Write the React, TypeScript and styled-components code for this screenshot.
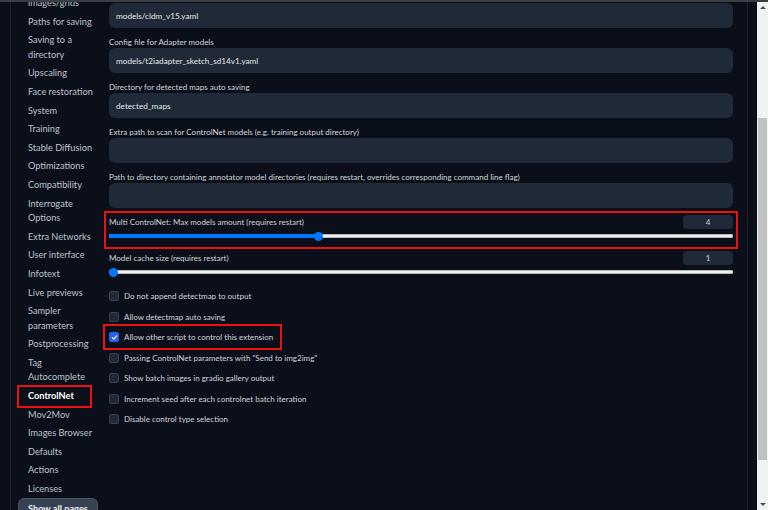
import styled, { createGlobalStyle } from 'styled-components';

const GlobalStyle = createGlobalStyle`
	html, body {
		margin: 0;
		padding: 0;
		background: #0b0f19;
	}
	body {
		font-family: Lato, 'Noto Sans', sans-serif;
	}
`;

const Frame = styled.div`
	display: flex;
	width: 768px;
	height: 510px;
	overflow: hidden;
	box-sizing: border-box;
	border-top: 2px solid #3a3d43;
	background: #0b0f19;
`;

const Sidebar = styled.aside`
	width: 100px;
	flex-shrink: 0;
	padding-left: 10px;
	box-sizing: border-box;
`;

const Nav = styled.nav`
	display: flex;
	flex-direction: column;
	gap: 4px;
	height: 520px;
	margin-top: -6px;
	padding-left: 17px;
	border-left: 1px solid #1c212c;
`;

const NavItem = styled.div<{ $active?: boolean }>`
	font-size: 9.2px;
	line-height: 14.6px;
	white-space: nowrap;
	color: ${(p) => (p.$active ? '#ffffff' : '#bcc3ce')};
	font-weight: ${(p) => (p.$active ? 700 : 400)};

	${(p) =>
		p.$active &&
		`
		align-self: flex-start;
		padding: 2.5px 16px 2.5px 9px;
		margin: -2.5px 0 -2.5px -9px;
		outline: 2px solid #ee1111;
	`}
`;

const ShowAll = styled.button`
	align-self: flex-start;
	width: 80px;
	margin: -3px 0 0 -10px;
	padding: 4px 9px;
	text-align: left;
	white-space: nowrap;
	font-family: inherit;
	font-size: 9.2px;
	font-weight: 700;
	color: #f3f4f6;
	background: #374151;
	border: 1px solid #4b5563;
	border-radius: 6px 6px 0 0;
`;

const Main = styled.main`
	flex: 1;
	display: flex;
	flex-direction: column;
	gap: 8px;
	margin-top: -11px;
	padding: 0 14px 0 9px;
	border-right: 1px solid #1c212c;
`;

const Field = styled.div`
	display: flex;
	flex-direction: column;
`;

const FieldLabel = styled.span`
	font-size: 8px;
	line-height: 12px;
	color: #d1d5db;
	white-space: nowrap;
`;

const TextBox = styled.input`
	height: 25px;
	width: 100%;
	box-sizing: border-box;
	padding: 0 7px;
	border: none;
	border-radius: 6px;
	background: #1f2937;
	color: #e5e7eb;
	font-family: inherit;
	font-size: 8.2px;
	outline: none;
`;

const SliderBlock = styled.div<{ $highlight?: boolean }>`
	display: flex;
	flex-direction: column;
	${(p) => p.$highlight && 'outline: 2px solid #ee1111; outline-offset: 3px;'}
`;

const SliderHead = styled.div`
	display: flex;
	align-items: center;
	justify-content: space-between;
	height: 14px;
	margin-top: -1px;
`;

const NumberBox = styled.div`
	width: 50px;
	height: 14px;
	line-height: 14px;
	border-radius: 4px;
	background: #1f2937;
	color: #d1d5db;
	font-size: 8px;
	text-align: center;
`;

const Track = styled.div`
	position: relative;
	height: 4px;
	margin: 5px 0 6px;
	border-radius: 3px;
	background: #efefef;
	box-shadow: inset 0 0 0 1px #b9b9b9;
`;

const Fill = styled.div`
	height: 100%;
	border-radius: 3px;
	background: #0075ff;
`;

const Thumb = styled.div`
	position: absolute;
	top: 50%;
	width: 9px;
	height: 9px;
	margin-top: -4.5px;
	border-radius: 50%;
	background: #0075ff;
`;

const CheckList = styled.div`
	display: flex;
	flex-direction: column;
	align-items: flex-start;
	gap: 6.5px;
	margin-top: 1px;
`;

const CheckRow = styled.label<{ $highlight?: boolean }>`
	display: inline-flex;
	align-items: center;
	gap: 5px;
	height: 14px;
	font-size: 8px;
	color: #d1d5db;
	white-space: nowrap;
	${(p) => p.$highlight && 'outline: 2px solid #ee1111; outline-offset: 4px; padding-right: 3px;'}
`;

const Box = styled.span<{ $checked?: boolean }>`
	display: flex;
	align-items: center;
	justify-content: center;
	width: 10px;
	height: 10px;
	box-sizing: border-box;
	border-radius: 2px;
	background: ${(p) => (p.$checked ? '#2563eb' : '#1f2937')};
	border: 1px solid ${(p) => (p.$checked ? '#2563eb' : '#374151')};
`;

const Scrollbar = styled.div`
	display: flex;
	flex-direction: column;
	align-items: center;
	width: 11px;
	flex-shrink: 0;
	margin-left: 9px;
	background: #f1f1f1;
`;

const ScrollArrow = styled.div<{ $down?: boolean }>`
	display: flex;
	align-items: center;
	justify-content: center;
	height: 11px;
	width: 100%;
	margin-top: ${(p) => (p.$down ? 'auto' : '0')};

	&::before {
		content: '';
		border-left: 3px solid transparent;
		border-right: 3px solid transparent;
		${(p) => (p.$down ? 'border-top: 3px solid #505050;' : 'border-bottom: 3px solid #505050;')}
	}
`;

const ScrollThumb = styled.div`
	width: 9px;
	height: 342px;
	margin-top: 105px;
	background: #c1c1c1;
`;

const navItems: string[][] = [
	['images/grids'],
	['Paths for saving'],
	['Saving to a', 'directory'],
	['Upscaling'],
	['Face restoration'],
	['System'],
	['Training'],
	['Stable Diffusion'],
	['Optimizations'],
	['Compatibility'],
	['Interrogate', 'Options'],
	['Extra Networks'],
	['User interface'],
	['Infotext'],
	['Live previews'],
	['Sampler', 'parameters'],
	['Postprocessing'],
	['Tag', 'Autocomplete'],
	['ControlNet'],
	['Mov2Mov'],
	['Images Browser'],
	['Defaults'],
	['Actions'],
	['Licenses'],
];

const textFields = [
	{ label: 'Config file for Control Net models', value: 'models/cldm_v15.yaml' },
	{ label: 'Config file for Adapter models', value: 'models/t2iadapter_sketch_sd14v1.yaml' },
	{ label: 'Directory for detected maps auto saving', value: 'detected_maps' },
	{ label: 'Extra path to scan for ControlNet models (e.g. training output directory)', value: '' },
	{
		label: 'Path to directory containing annotator model directories (requires restart, overrides corresponding command line flag)',
		value: '',
	},
];

const checks = [
	{ label: 'Do not append detectmap to output' },
	{ label: 'Allow detectmap auto saving' },
	{ label: 'Allow other script to control this extension', checked: true },
	{ label: 'Passing ControlNet parameters with "Send to img2img"' },
	{ label: 'Show batch images in gradio gallery output' },
	{ label: 'Increment seed after each controlnet batch iteration' },
	{ label: 'Disable control type selection' },
];

function Slider({ label, value, min, max, highlight }: { label: string; value: number; min: number; max: number; highlight?: boolean }) {
	const ratio = (value - min) / (max - min);
	return (
		<SliderBlock $highlight={highlight}>
			<SliderHead>
				<FieldLabel>{label}</FieldLabel>
				<NumberBox>{value}</NumberBox>
			</SliderHead>
			<Track>
				<Fill style={{ width: `calc(${ratio} * (100% - 9px) + 4.5px)` }} />
				<Thumb style={{ left: `calc(${ratio} * (100% - 9px))` }} />
			</Track>
		</SliderBlock>
	);
}

function App() {
	return (
		<>
			<GlobalStyle />
			<Frame>
				<Sidebar>
					<Nav>
						{navItems.map((lines) => (
							<NavItem key={lines.join(' ')} $active={lines[0] === 'ControlNet'}>
								{lines.map((line, i) => (
									<div key={i}>{line}</div>
								))}
							</NavItem>
						))}
						<ShowAll>Show all pages</ShowAll>
					</Nav>
				</Sidebar>
				<Main>
					{textFields.map((f) => (
						<Field key={f.label}>
							<FieldLabel>{f.label}</FieldLabel>
							<TextBox readOnly value={f.value} />
						</Field>
					))}
					<Slider label="Multi ControlNet: Max models amount (requires restart)" value={4} min={1} max={10} highlight />
					<Slider label="Model cache size (requires restart)" value={1} min={1} max={10} />
					<CheckList>
						{checks.map((c) => (
							<CheckRow key={c.label} $highlight={c.checked}>
								<Box $checked={c.checked}>
									{c.checked && (
										<svg width="7" height="7" viewBox="0 0 8 8">
											<path d="M1.5 4.2 L3.2 5.8 L6.5 2.2" fill="none" stroke="#fff" strokeWidth="1.3" strokeLinecap="round" strokeLinejoin="round" />
										</svg>
									)}
								</Box>
								{c.label}
							</CheckRow>
						))}
					</CheckList>
				</Main>
				<Scrollbar>
					<ScrollArrow />
					<ScrollThumb />
					<ScrollArrow $down />
				</Scrollbar>
			</Frame>
		</>
	);
}

export default App;
